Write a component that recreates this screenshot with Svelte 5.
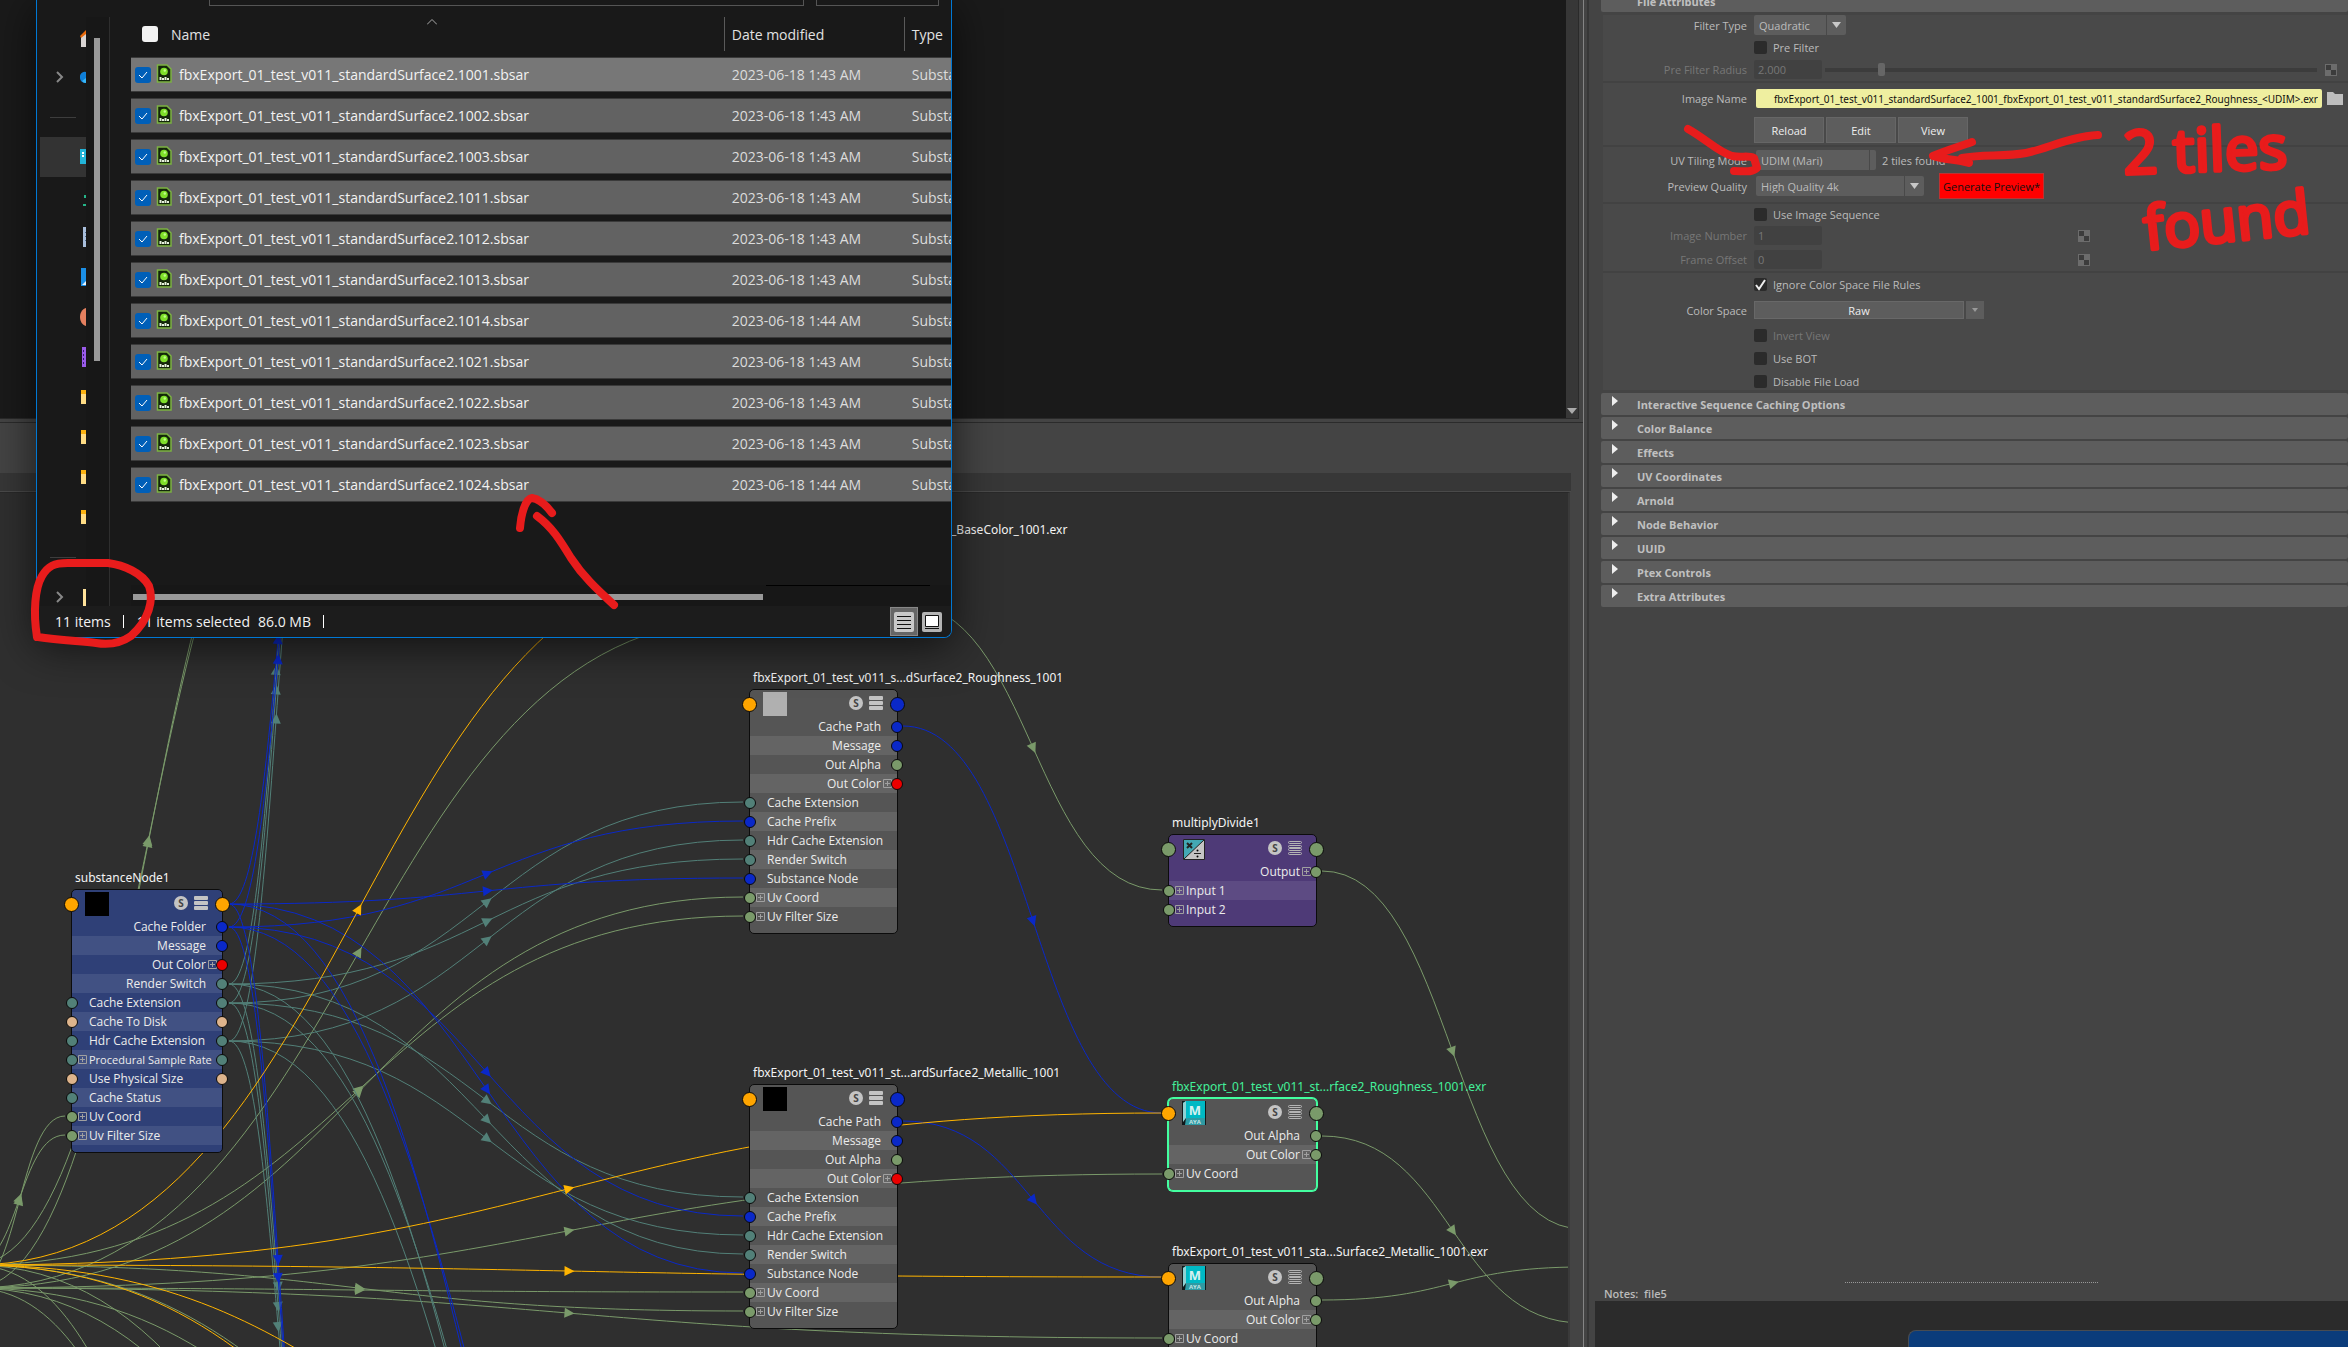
<script lang="ts">
    type Side = 'in' | 'out' | 'both'
    type Edge = [number, number, number, number, string]

    interface Attr {
        name: string
        side: Side
        color: string
        plus?: boolean
    }

    interface GraphNode {
        title: string
        x: number
        y: number
        width: number
        kind: string
        thumb: string
        left: string
        right: string
        attrs: Attr[]
    }

    const ORANGE = '#ffa500'
    const BLUE = '#0a28c8'
    const RED = '#eb0000'
    const GREEN = '#7a9a6a'
    const TEAL = '#528078'
    const SAND = '#deb48c'
    const YELLOW = '#ffb400'

    // Top of the graph canvas, node and edge coordinates are relative to the window
    const CANVAS_TOP = 493

    const files = [
        ['1001', '1:43'],
        ['1002', '1:43'],
        ['1003', '1:43'],
        ['1011', '1:43'],
        ['1012', '1:43'],
        ['1013', '1:43'],
        ['1014', '1:44'],
        ['1021', '1:43'],
        ['1022', '1:43'],
        ['1023', '1:43'],
        ['1024', '1:44'],
    ]

    const places = [
        'home', 'cloud', 'line', 'desktop', 'download', 'document', 'picture', 'music',
        'video', 'folder', 'folder', 'folder', 'folder', 'line', 'drive',
    ]

    const sections = [
        'Interactive Sequence Caching Options',
        'Color Balance',
        'Effects',
        'UV Coordinates',
        'Arnold',
        'Node Behavior',
        'UUID',
        'Ptex Controls',
        'Extra Attributes',
    ]

    const textureAttrs: Attr[] = [
        { name: 'Cache Path', side: 'out', color: BLUE },
        { name: 'Message', side: 'out', color: BLUE },
        { name: 'Out Alpha', side: 'out', color: GREEN },
        { name: 'Out Color', side: 'out', color: RED, plus: true },
        { name: 'Cache Extension', side: 'in', color: TEAL },
        { name: 'Cache Prefix', side: 'in', color: BLUE },
        { name: 'Hdr Cache Extension', side: 'in', color: TEAL },
        { name: 'Render Switch', side: 'in', color: TEAL },
        { name: 'Substance Node', side: 'in', color: BLUE },
        { name: 'Uv Coord', side: 'in', color: GREEN, plus: true },
        { name: 'Uv Filter Size', side: 'in', color: GREEN, plus: true },
    ]

    const fileAttrs: Attr[] = [
        { name: 'Out Alpha', side: 'out', color: GREEN },
        { name: 'Out Color', side: 'out', color: GREEN, plus: true },
        { name: 'Uv Coord', side: 'in', color: GREEN, plus: true },
    ]

    const nodes: GraphNode[] = [
        {
            title: 'substanceNode1',
            x: 71, y: 889, width: 152, kind: 'substance', thumb: 'black',
            left: ORANGE, right: ORANGE,
            attrs: [
                { name: 'Cache Folder', side: 'out', color: BLUE },
                { name: 'Message', side: 'out', color: BLUE },
                { name: 'Out Color', side: 'out', color: RED, plus: true },
                { name: 'Render Switch', side: 'out', color: TEAL },
                { name: 'Cache Extension', side: 'both', color: TEAL },
                { name: 'Cache To Disk', side: 'both', color: SAND },
                { name: 'Hdr Cache Extension', side: 'both', color: TEAL },
                { name: 'Procedural Sample Rate', side: 'both', color: TEAL, plus: true },
                { name: 'Use Physical Size', side: 'both', color: SAND },
                { name: 'Cache Status', side: 'in', color: TEAL },
                { name: 'Uv Coord', side: 'in', color: GREEN, plus: true },
                { name: 'Uv Filter Size', side: 'in', color: GREEN, plus: true },
            ],
        },
        {
            title: 'fbxExport_01_test_v011_s...dSurface2_Roughness_1001',
            x: 749, y: 689, width: 149, kind: 'texture', thumb: 'grey',
            left: ORANGE, right: BLUE, attrs: textureAttrs,
        },
        {
            title: 'fbxExport_01_test_v011_st...ardSurface2_Metallic_1001',
            x: 749, y: 1084, width: 149, kind: 'texture', thumb: 'black',
            left: ORANGE, right: BLUE, attrs: textureAttrs,
        },
        {
            title: 'multiplyDivide1',
            x: 1168, y: 834, width: 149, kind: 'math', thumb: 'math',
            left: GREEN, right: GREEN,
            attrs: [
                { name: 'Output', side: 'out', color: GREEN, plus: true },
                { name: 'Input 1', side: 'in', color: GREEN, plus: true },
                { name: 'Input 2', side: 'in', color: GREEN, plus: true },
            ],
        },
        {
            title: 'fbxExport_01_test_v011_st...rface2_Roughness_1001.exr',
            x: 1168, y: 1098, width: 149, kind: 'selected', thumb: 'maya',
            left: ORANGE, right: GREEN, attrs: fileAttrs,
        },
        {
            title: 'fbxExport_01_test_v011_sta...Surface2_Metallic_1001.exr',
            x: 1168, y: 1263, width: 149, kind: 'texture', thumb: 'maya',
            left: ORANGE, right: GREEN, attrs: fileAttrs,
        },
    ]

    // [x1, y1, x2, y2, color]
    const edges: Edge[] = [
        [903, 603, 1162, 890, GREEN],
        [1322, 871, 1582, 1229, GREEN],
        [1322, 1136, 1582, 1323, GREEN],
        [1322, 1300, 1582, 1267, GREEN],
        [-27, 1288, 743, 619, GREEN],
        [-27, 1288, 743, 897, GREEN],
        [-27, 1265, 743, 916, GREEN],
        [-27, 1288, 743, 1292, GREEN],
        [-27, 1265, 743, 1311, GREEN],
        [-27, 1288, 1162, 1174, GREEN],
        [-27, 1288, 1162, 1338, GREEN],
        [-27, 1265, 323, 419, GREEN],
        [-27, 1288, 323, 400, GREEN],
        [-27, 1288, 65, 1116, GREEN],
        [-27, 1265, 65, 1135, GREEN],
        [-27, 1288, 743, 1687, GREEN],
        [-27, 1265, 743, 1640, GREEN],
        [-27, 1288, 743, 2062, GREEN],
        [-27, 1265, 743, 2090, GREEN],
        [-27, 1288, 323, 1686, GREEN],
        [-27, 1265, 323, 1694, GREEN],
        [229, 984, 743, 859, TEAL],
        [229, 1003, 743, 802, TEAL],
        [229, 1041, 743, 840, TEAL],
        [229, 984, 743, 1254, TEAL],
        [229, 1003, 743, 1197, TEAL],
        [229, 1041, 743, 1235, TEAL],
        [229, 984, 743, 2044, TEAL],
        [229, 1003, 743, 1987, TEAL],
        [229, 1041, 743, 2025, TEAL],
        [229, 984, 323, 360, TEAL],
        [229, 1003, 323, 380, TEAL],
        [229, 1041, 323, 400, TEAL],
        [229, 984, 327, 1586, TEAL],
        [229, 1003, 327, 1607, TEAL],
        [229, 1041, 327, 1609, TEAL],
        [229, 904, 743, 878, BLUE],
        [229, 927, 743, 821, BLUE],
        [229, 904, 743, 1273, BLUE],
        [229, 927, 743, 1216, BLUE],
        [229, 904, 743, 2000, BLUE],
        [229, 927, 743, 1940, BLUE],
        [229, 904, 327, 378, BLUE],
        [229, 927, 327, 395, BLUE],
        [229, 904, 327, 1612, BLUE],
        [229, 927, 327, 1625, BLUE],
        [903, 726, 1162, 1113, BLUE],
        [903, 1121, 1162, 1277, BLUE],
        [-27, 1265, 1162, 1113, YELLOW],
        [-27, 1265, 1162, 1277, YELLOW],
        [-27, 1265, 743, 556, YELLOW],
        [-27, 1265, 743, 1655, YELLOW],
        [-27, 1265, 743, 1508, YELLOW],
    ]

    function edgePath([x1, y1, x2, y2]: Edge): string {
        const mid = (x1 + x2) / 2
        return `M${x1},${y1} C${mid},${y1} ${mid},${y2} ${x2},${y2}`
    }

    function arrowTransform([x1, y1, x2, y2]: Edge): string {
        const angle = (Math.atan2(2 * (y2 - y1), x2 - x1) * 180) / Math.PI
        return `translate(${(x1 + x2) / 2},${(y1 + y2) / 2}) rotate(${angle})`
    }
</script>

{#snippet plusBox()}
    <svg class="plus" width="9" height="9" viewBox="0 0 9 9">
        <path d="M.5 .5h8v8h-8z M4.5 2v5 M2 4.5h5" />
    </svg>
{/snippet}

{#snippet checker()}
    <svg class="checker" width="12" height="12" viewBox="0 0 12 12">
        <rect width="12" height="12" fill="#6c6c6c" />
        <rect x="1" y="1" width="5" height="5" fill="#3c3c3c" />
        <rect x="6" y="6" width="5" height="5" fill="#3c3c3c" />
    </svg>
{/snippet}

{#snippet triangle()}
    <svg class="triangle" width="9" height="6" viewBox="0 0 9 6"><path d="M0 0h9L4.500 6z" /></svg>
{/snippet}

<div class="desktop">
    <main class="workspace">
        <div class="viewport">
            <div class="viewport-scroll">
                <svg width="10" height="6" viewBox="0 0 10 6"><path d="M0 0h10L5 6z" fill="#aaa" /></svg>
            </div>
        </div>
        <div class="toolbar-gap"></div>
        <div class="tab-strip"></div>

        <div class="graph">
            <svg class="edges" width="1568" height="854" viewBox="0 {CANVAS_TOP} 1568 854">
                {#each edges as edge}
                    <path d={edgePath(edge)} stroke={edge[4]} fill="none" />
                    <path d="M-3 -5L7 0L-3 5z" fill={edge[4]} transform={arrowTransform(edge)} />
                {/each}
            </svg>

            <span class="node-title" style:left="951px" style:top="{521 - CANVAS_TOP}px">_BaseColor_1001.exr</span>

            {#each nodes as node}
                <span
                    class="node-title"
                    class:picked={node.kind === 'selected'}
                    style:left="{node.x + 4}px"
                    style:top="{node.y - 20 - CANVAS_TOP}px">{node.title}</span>
                <section
                    class="node {node.kind}"
                    style:left="{node.x}px"
                    style:top="{node.y - CANVAS_TOP}px"
                    style:width="{node.width}px"
                >
                    <header>
                        <i class="port big left" style:background={node.left}></i>
                        {#if node.thumb === 'maya'}
                            <svg width="24" height="24" viewBox="0 0 24 24">
                                <path d="M0 0h24v24H0z" fill="#10181a" />
                                <path d="M1 2L4 0h19v17H1z" fill="#00b9c4" />
                                <path d="M1 2L4 0v17L1 21z" fill="#8fd0d2" />
                                <path d="M4 17h19v7H3z" fill="#2e9aa3" />
                                <text x="13" y="14" class="logo-m">M</text>
                                <text x="13" y="23" class="logo-aya">AYA</text>
                            </svg>
                        {:else if node.thumb === 'math'}
                            <svg width="24" height="24" viewBox="0 0 24 24">
                                <path d="M1.500 2.500h21v20h-21z" fill="#c4c4c4" stroke="#222" />
                                <path d="M2 3h20L2 22z" fill="#43a8b4" />
                                <path d="M22 3L2 22" stroke="#222" />
                                <path d="M5 6l5 5 M10 6l-5 5" stroke="#222" stroke-width="2" />
                                <path d="M12 16.500h7" stroke="#222" />
                                <circle cx="15.500" cy="13.500" r="1" /><circle cx="15.500" cy="19.500" r="1" />
                            </svg>
                        {:else}
                            <span class="thumb {node.thumb}"></span>
                        {/if}
                        <span class="swatch-s">S</span>
                        <svg
                            class="stack"
                            class:outlined={node.thumb === 'maya' || node.thumb === 'math'}
                            width="14" height="14" viewBox="0 0 14 14"
                        >
                            {#if node.thumb === 'maya' || node.thumb === 'math'}
                                {#each [0, 4, 7, 11] as y}
                                    <rect x=".5" y={y + 0.5} width="13" height="2" rx="1" />
                                {/each}
                            {:else}
                                {#each [0, 5, 10] as y}
                                    <rect x="0" {y} width="14" height="4" rx="1" />
                                {/each}
                            {/if}
                        </svg>
                        <i class="port big right" style:background={node.right}></i>
                    </header>
                    <ul>
                        {#each node.attrs as attr}
                            <li class:out={attr.side === 'out'} class:long={attr.name.length > 20}>
                                {#if attr.side !== 'out'}
                                    <i class="port left" style:background={attr.color}></i>
                                {/if}
                                <span class="slot">{#if attr.plus}{@render plusBox()}{/if}</span>
                                <span>{attr.name}</span>
                                {#if attr.side !== 'in'}
                                    <i class="port right" style:background={attr.color}></i>
                                {/if}
                            </li>
                        {/each}
                    </ul>
                </section>
            {/each}
        </div>
    </main>

    <aside class="attributes">
        <button class="section open">File Attributes</button>
        <form class="fields">
            <div class="group">
                <div class="row">
                    <label for="filter">Filter Type</label>
                    <span class="combo filter">
                        <select id="filter"><option>Quadratic</option></select>
                        {@render triangle()}
                    </span>
                </div>
                <div class="row">
                    <span></span>
                    <label class="check"><input type="checkbox" />Pre Filter</label>
                </div>
                <div class="row off">
                    <label for="radius">Pre Filter Radius</label>
                    <input id="radius" class="small" type="text" value="2.000" disabled />
                    <input class="slider" type="range" min="0" max="100" value="11" aria-label="Pre Filter Radius" disabled />
                    {@render checker()}
                </div>
            </div>

            <div class="group image">
                <div class="row">
                    <label for="image">Image Name</label>
                    <input
                        id="image"
                        class="path"
                        type="text"
                        value="fbxExport_01_test_v011_standardSurface2_1001_fbxExport_01_test_v011_standardSurface2_Roughness_<UDIM>.exr"
                    />
                    <button type="button" class="browse" aria-label="Browse">
                        <svg width="18" height="15" viewBox="0 0 18 15">
                            <path d="M1 1h6l2 2h8v11H1z" fill="#bdbdbd" />
                        </svg>
                    </button>
                </div>
                <div class="row">
                    <span></span>
                    <div class="actions">
                        <button type="button">Reload</button>
                        <button type="button">Edit</button>
                        <button type="button">View</button>
                    </div>
                </div>
            </div>

            <div class="group tiling">
                <div class="row">
                    <label for="tiling">UV Tiling Mode</label>
                    <span class="combo cut">
                        <select id="tiling"><option>UDIM (Mari)</option></select>
                    </span>
                    <span>2 tiles found</span>
                </div>
                <div class="row">
                    <label for="quality">Preview Quality</label>
                    <span class="combo quality">
                        <select id="quality"><option>High Quality 4k</option></select>
                        {@render triangle()}
                    </span>
                    <button type="button" class="generate">Generate Preview*</button>
                </div>
            </div>

            <div class="group sequence">
                <div class="row">
                    <span></span>
                    <label class="check"><input type="checkbox" />Use Image Sequence</label>
                </div>
                <div class="row off">
                    <label for="number">Image Number</label>
                    <input id="number" class="small" type="text" value="1" disabled />
                    <span class="far">{@render checker()}</span>
                </div>
                <div class="row off">
                    <label for="offset">Frame Offset</label>
                    <input id="offset" class="small" type="text" value="0" disabled />
                    <span class="far">{@render checker()}</span>
                </div>
            </div>

            <div class="group color">
                <div class="row">
                    <span></span>
                    <label class="check"><input type="checkbox" checked />Ignore Color Space File Rules</label>
                </div>
                <div class="row">
                    <span>Color Space</span>
                    <div class="split">
                        <button type="button" class="raw">Raw</button>
                        <button type="button" class="more" aria-label="Color spaces">
                            <svg width="6" height="4" viewBox="0 0 6 4"><path d="M0 0h6L3 4z" fill="#999" /></svg>
                        </button>
                    </div>
                </div>
                <div class="row off">
                    <span></span>
                    <label class="check"><input type="checkbox" disabled />Invert View</label>
                </div>
                <div class="row">
                    <span></span>
                    <label class="check"><input type="checkbox" />Use BOT</label>
                </div>
                <div class="row">
                    <span></span>
                    <label class="check"><input type="checkbox" />Disable File Load</label>
                </div>
            </div>
        </form>

        {#each sections as section}
            <button class="section">
                <svg width="6" height="10" viewBox="0 0 6 10"><path d="M0 0l6 5-6 5z" fill="#eee" /></svg>
                {section}
            </button>
        {/each}

        <div class="notes">
            <div class="grip"></div>
            <label for="notes">Notes:&nbsp; file5</label>
            <textarea id="notes"></textarea>
        </div>
        <div class="toast"></div>
    </aside>

    <div class="explorer">
        <div class="address"><span></span><span></span></div>
        <div class="explorer-body">
            <nav>
                {#each places as place, i}
                    <a href="#place-{i}" class:current={place === 'desktop'} aria-label={place}>
                        {#if place === 'line'}
                            <span class="rule"></span>
                        {:else}
                            {#if place === 'cloud' || place === 'drive'}
                                <svg class="chevron" width="8" height="12" viewBox="0 0 8 12"><path d="M1 1l5 5-5 5" /></svg>
                            {/if}
                            <svg class="place" width="6" height="20" viewBox="0 0 6 20">
                                {#if place === 'home'}
                                    <path d="M1 9l5-5v16H1z" fill="#d8d4d2" />
                                    <path d="M0 9l6-6v4L1 11z" fill="#e8690b" />
                                {:else if place === 'cloud'}
                                    <path d="M6 5a5 5 0 0 0-6 6c0 3 3 5 6 5z" fill="#0f7fd8" />
                                    <path d="M6 11l-4 3c1 1 2 2 4 2z" fill="#38b6f5" />
                                {:else if place === 'desktop'}
                                    <path d="M0 2h6v15H0z" fill="#22b4d8" />
                                    <path d="M2 5h2v2H2z M2 8h2v2H2z" fill="#fff" />
                                {:else if place === 'download'}
                                    <path d="M4 8h2v3H4z M3 17h3v2H3z" fill="#25b589" />
                                {:else if place === 'document'}
                                    <path d="M3 0h3v20H3z" fill="#a9bfdc" />
                                    <path d="M5 5h1v1H5z M5 9h1v1H5z M5 13h1v1H5z" fill="#4f6a8c" />
                                {:else if place === 'picture'}
                                    <path d="M1 1h5v18H1z" fill="#1b8fe6" />
                                    <path d="M6 14l-4 4h4z" fill="#e8f4ff" />
                                {:else if place === 'music'}
                                    <path d="M6 1C2 2 0 6 0 10s2 8 6 9z" fill="#e5805f" />
                                {:else if place === 'video'}
                                    <path d="M2 0h4v20H2z" fill="#9a5bea" />
                                    <path d="M3 3h1v2H3z M3 7h1v2H3z M3 11h1v2H3z M3 15h1v2H3z" fill="#3a1a70" />
                                {:else if place === 'folder'}
                                    <path d="M1 3h5v4H1z" fill="#fbb212" />
                                    <path d="M1 7h5v10H1z" fill="#ffdc84" />
                                {:else}
                                    <path d="M3 2h3v17H3z" fill="#ffe29a" />
                                {/if}
                            </svg>
                        {/if}
                    </a>
                {/each}
            </nav>
            <div class="nav-scroll"><span></span></div>
            <div class="listing">
                <table>
                    <thead>
                        <tr>
                            <th>
                                <div class="cell">
                                    <input type="checkbox" class="select-all" aria-label="Select all" />Name
                                    <svg class="sort" width="10" height="6" viewBox="0 0 10 6"><path d="M0 5.500L5 .5l5 5" /></svg>
                                </div>
                            </th>
                            <th class="col-date">Date modified</th>
                            <th class="col-type">Type</th>
                        </tr>
                    </thead>
                    <tbody>
                        {#each files as [udim, time], i}
                            <tr class:focused={i === 0}>
                                <td>
                                    <label class="cell">
                                        <input type="checkbox" checked />
                                        <svg width="16" height="19" viewBox="0 0 16 19">
                                            <path d="M1.500 1h9.500l4 4v13H1.500z" fill="#14260a" stroke="#7cb342" stroke-width="1.500" />
                                            <circle cx="8" cy="7.500" r="3.800" fill="#7fe02a" />
                                            <circle cx="8.800" cy="6.500" r="1.200" fill="#c2ff8a" />
                                            <path d="M3.500 13h2v3h-2z M6 14h2v2H6z M8.500 13h2v3h-2z M11 14h2v2h-2z" fill="#e6f0dc" />
                                        </svg>
                                        fbxExport_01_test_v011_standardSurface2.{udim}.sbsar
                                    </label>
                                </td>
                                <td class="meta">2023-06-18 {time} AM</td>
                                <td class="meta">Substance</td>
                            </tr>
                        {/each}
                    </tbody>
                </table>
                <div class="h-scroll"><span></span></div>
            </div>
        </div>
        <footer>
            <span>11 items</span>
            <i></i>
            <span>11 items selected</span>
            <span class="size">86.0 MB</span>
            <i></i>
            <button class="view active" aria-label="Details view">
                <svg width="20" height="20" viewBox="0 0 20 20">
                    <rect width="20" height="20" rx="2" fill="#c8c8c8" />
                    <path d="M3 4.500h14 M3 8.500h14 M3 12.500h14 M3 16.500h14" stroke="#111" />
                </svg>
            </button>
            <button class="view" aria-label="Large icons view">
                <svg width="20" height="20" viewBox="0 0 20 20">
                    <rect width="20" height="20" rx="2" fill="#b4b4b4" />
                    <path d="M3.500 3.500h13v11h-13z" fill="#fff" stroke="#111" />
                    <path d="M3 16.500h14" stroke="#111" />
                </svg>
            </button>
        </footer>
    </div>

    <svg class="ink" width="2348" height="1347" viewBox="0 0 2348 1347">
        <path d="M37 637C33 612 35 588 42 576C48 566 54 563 68 563L108 563C124 565 142 573 149 586C154 600 149 620 131 636C121 643 108 645 96 643C78 641 58 640 38 637" />
        <path d="M520 528C521 515 525 499 532 498C539 499 546 505 552 513" />
        <path d="M537 516C552 527 560 540 571 558C584 578 600 592 614 605" />
        <path d="M1688 129C1706 139 1718 152 1732 156C1742 158 1748 155 1754 158L1757 168C1752 173 1744 171 1734 171" />
        <path d="M2098 135C2072 136 2046 149 2026 153C2004 157 1982 154 1962 158" />
        <path d="M1972 142C1958 147 1944 151 1933 156C1944 160 1956 159 1969 163" />
        <text x="2124" y="174" transform="rotate(-2 2124 174)">2 tiles</text>
        <text x="2146" y="250" transform="rotate(-6 2146 250)">found</text>
    </svg>
</div>

<style>
    :global(body) {
        background: #444;
        overflow: hidden;
    }

    .desktop {
        position: relative;
        display: grid;
        grid-template-columns: 1583fr 765fr;
        min-height: 100vh;
        overflow: hidden;
        font-family: 'Open Sans', 'Noto Sans', sans-serif;
        font-size: 11px;
        color: #bbb;
    }

    button,
    input,
    select,
    textarea {
        font: inherit;
        color: inherit;
        margin: 0;
        padding: 0;
        border: 0;
        box-sizing: border-box;
    }

    /* Left side */

    .workspace {
        display: flex;
        flex-direction: column;
        min-width: 0;
    }

    .viewport {
        display: flex;
        justify-content: flex-end;
        height: 418px;
        margin-right: 4px;
        background: #1a1a1a;
        border-right: 1px solid #2a2a2a;
        border-bottom: 1px solid #2a2a2a;
    }

    .viewport-scroll {
        display: flex;
        align-items: flex-end;
        justify-content: center;
        width: 12px;
        padding-bottom: 4px;
        background: #373737;
    }

    .toolbar-gap {
        height: 50px;
        margin-top: 3px;
        border-top: 1px solid #2b2b2b;
    }

    .tab-strip {
        height: 18px;
        margin-right: 12px;
        background: #373737;
        border-bottom: 1px solid #4a4a4a;
    }

    .graph {
        position: relative;
        flex: 1;
        margin-right: 13px;
        background: #2f2f2f;
        border-top: 1px solid #292929;
        border-right: 2px solid #3a3a3a;
        overflow: hidden;
        font-size: 12px;
        box-sizing: border-box;
    }

    .edges {
        position: absolute;
        left: 0;
        top: 0;
        overflow: visible;
    }

    .node-title {
        position: absolute;
        font-family: 'Noto Sans', sans-serif;
        font-size: 12px;
        line-height: 18px;
        color: #f4f4f4;
        white-space: nowrap;
    }

    .node-title.picked {
        color: #43f09a;
    }

    .node {
        position: absolute;
        box-sizing: border-box;
        padding-bottom: 7px;
        background: #555;
        border: 1px solid #0c0c0c;
        border-radius: 5px;
        color: #ececec;
    }

    .node.substance {
        background: #2f4077;
    }

    .node.math {
        background: #4e3a77;
    }

    .node.selected {
        box-shadow: 0 0 0 1px #43ffa0;
        border-color: #43ffa0;
    }

    .node header {
        position: relative;
        display: flex;
        align-items: center;
        height: 27px;
        padding: 0 14px 0 13px;
    }

    .thumb {
        width: 24px;
        height: 24px;
        background: #000;
    }

    .thumb.grey {
        background: #b0b0b0;
    }

    .logo-m {
        font-size: 13px;
        font-weight: 700;
        text-anchor: middle;
        fill: #d5f2f2;
    }

    .logo-aya {
        font-size: 6px;
        font-weight: 700;
        text-anchor: middle;
        fill: #c5e4e6;
    }

    .swatch-s {
        width: 14px;
        height: 14px;
        margin: 0 6px 2px auto;
        border-radius: 50%;
        background: #c4c4c4;
        color: #444;
        font-size: 10px;
        font-weight: 700;
        line-height: 14px;
        text-align: center;
    }

    .stack {
        margin-bottom: 2px;
    }

    .stack rect {
        fill: #c4c4c4;
    }

    .stack.outlined rect {
        fill: none;
        stroke: #b4b4b4;
    }

    .node ul {
        margin: 0;
        padding: 0;
        list-style: none;
    }

    .node li {
        position: relative;
        display: flex;
        align-items: center;
        gap: 2px;
        height: 19px;
        padding: 0 5px 0 6px;
        white-space: nowrap;
    }

    .node li:nth-child(even) {
        background: rgba(255, 255, 255, 0.09);
    }

    .node li.out {
        flex-direction: row-reverse;
    }

    /* keeps the name clear of the right port */
    .node li.long {
        font-size: 11px;
    }

    .slot {
        display: flex;
        flex: none;
        width: 9px;
    }

    .plus path {
        fill: none;
        stroke: #a0a0a0;
    }

    .port {
        position: absolute;
        top: 50%;
        width: 10px;
        height: 10px;
        margin-top: -6px;
        border: 1px solid #0a0a0a;
        border-radius: 50%;
    }

    .port.left {
        left: -6px;
    }

    .port.right {
        right: -6px;
    }

    .port.big {
        width: 13px;
        height: 13px;
        margin-top: -7px;
    }

    .port.big.left {
        left: -8px;
    }

    .port.big.right {
        right: -8px;
    }

    /* Attribute editor */

    .attributes {
        position: relative;
        display: flex;
        flex-direction: column;
        min-width: 0;
        padding-left: 11px;
        border-left: 1px solid #858585;
        background: linear-gradient(to right, #444 3px, #373737 3px, #373737 5px, #444 5px);
    }

    .section {
        display: flex;
        align-items: center;
        gap: 19px;
        height: 22px;
        margin: 0 0 2px 6px;
        padding-left: 11px;
        background: #5d5d5d;
        border-radius: 2px;
        font-weight: 700;
        color: #c0c0c0;
        text-align: left;
    }

    .section.open {
        margin-top: -10px;
        margin-bottom: 3px;
        padding-left: 36px;
    }

    .section svg {
        margin-bottom: 6px;
    }

    .fields {
        margin: 0 0 3px 8px;
        background: #494949;
    }

    .group {
        display: flex;
        flex-direction: column;
        gap: 6px;
        padding-bottom: 2px;
        border-bottom: 2px solid #424242;
    }

    .group.image {
        gap: 9px;
        padding: 6px 0 2px;
    }

    .group.tiling {
        gap: 3px;
        padding: 3px 0;
    }

    .group.sequence {
        gap: 5px;
        padding: 4px 0 2px;
    }

    .group.color {
        gap: 10px;
        padding: 5px 0 2px;
        border-bottom: 0;
    }

    .row {
        display: flex;
        align-items: center;
        line-height: 13px;
        white-space: nowrap;
    }

    .row > :first-child {
        flex: none;
        width: 144px;
        margin-right: 7px;
        text-align: right;
    }

    .row.off {
        color: #777;
    }

    .check {
        display: flex;
        align-items: center;
        gap: 6px;
    }

    .check input {
        appearance: none;
        width: 13px;
        height: 13px;
        background: #2b2b2b;
        border-radius: 2px;
    }

    .check input:checked {
        background: #2b2b2b
            url("data:image/svg+xml,%3Csvg xmlns='http://www.w3.org/2000/svg' viewBox='0 0 13 13'%3E%3Cpath d='M2 7l3 4 6-9' fill='none' stroke='%23eee' stroke-width='2'/%3E%3C/svg%3E");
    }

    .combo {
        display: flex;
        align-items: center;
        position: relative;
        height: 20px;
        background: #5d5d5d;
        border-radius: 2px;
    }

    .combo select {
        appearance: none;
        width: 100%;
        height: 20px;
        padding-left: 5px;
        background: linear-gradient(#494949, #494949) no-repeat right 19px top / 1px 100%;
    }

    .combo .triangle {
        position: absolute;
        right: 5px;
        pointer-events: none;
    }

    .triangle path {
        fill: #c8c8c8;
    }

    .filter {
        width: 92px;
    }

    .quality,
    .cut {
        margin-left: 2px;
    }

    .quality {
        width: 168px;
    }

    .cut {
        width: 120px;
        margin-right: 6px;
    }

    .cut select {
        background-position: right 6px top;
    }

    .small {
        width: 68px;
        height: 19px;
        padding-left: 4px;
        background: #414141;
        border-radius: 2px;
    }

    .slider {
        appearance: none;
        flex: 1;
        height: 14px;
        margin: 0 8px 0 3px;
        background: linear-gradient(#3c3c3c, #3c3c3c) no-repeat center / 100% 4px;
    }

    .slider::-webkit-slider-thumb {
        appearance: none;
        width: 7px;
        height: 13px;
        background: #666;
        border-radius: 2px;
    }

    .checker {
        margin-right: 11px;
    }

    .far {
        display: flex;
        margin-left: 256px;
    }

    .path {
        flex: 1;
        min-width: 0;
        height: 19px;
        margin-left: 2px;
        padding: 0 4px;
        background: #efefa0;
        border-radius: 2px;
        font-family: 'Noto Sans', sans-serif;
        font-size: 10px;
        text-align: right;
        color: #111;
    }

    .browse {
        display: flex;
        margin: 0 4px;
        background: none;
    }

    .actions,
    .split {
        display: flex;
        gap: 2px;
    }

    .actions button {
        width: 70px;
        height: 26px;
        background: #5d5d5d;
        border: 1px solid #666;
        color: #eee;
    }

    .generate {
        height: 26px;
        margin-left: 15px;
        padding: 0 3px;
        background: #f00;
        border: 1px solid #b33;
        color: #111;
    }

    .raw {
        width: 210px;
        height: 18px;
        background: #5d5d5d;
        border: 1px solid #686868;
        color: #eee;
    }

    .more {
        display: flex;
        align-items: center;
        justify-content: center;
        width: 18px;
        height: 18px;
        background: #5d5d5d;
    }

    .notes {
        display: flex;
        flex-direction: column;
        margin-top: auto;
    }

    .grip {
        width: 253px;
        margin: 0 auto 4px;
        border-top: 1px dotted #999;
    }

    .notes label {
        padding-left: 9px;
        line-height: 14px;
        font-weight: 600;
    }

    .notes textarea {
        height: 46px;
        background: #2b2b2b;
        resize: none;
    }

    .toast {
        position: absolute;
        right: 0;
        bottom: 0;
        width: 439px;
        height: 16px;
        background: #0b3c7b;
        border: 1px solid #484c52;
        border-width: 1px 0 0 1px;
        border-top-left-radius: 8px;
    }

    /* File explorer window */

    .explorer {
        position: absolute;
        left: 36px;
        top: 0;
        width: 39vw;
        box-sizing: border-box;
        background: #191919;
        border: 1px solid #0078d4;
        border-top: 0;
        border-radius: 0 0 8px 8px;
        box-shadow: 0 8px 44px rgba(0, 0, 0, 0.65);
        overflow: hidden;
        font-size: 14px;
        color: #f2f2f2;
    }

    .address {
        display: flex;
        gap: 12px;
        height: 17px;
        padding: 0 12px 0 172px;
    }

    .address span {
        flex: 1;
        height: 5px;
        border: 1px solid #555;
        border-top: 0;
    }

    .address span:last-child {
        flex: 0 0 121px;
    }

    .explorer-body {
        display: flex;
        height: 589px;
    }

    nav {
        display: flex;
        flex-direction: column;
        width: 49px;
        overflow: hidden;
    }

    nav a {
        display: flex;
        flex: none;
        align-items: center;
        justify-content: flex-end;
        height: 40px;
        margin-left: 3px;
    }

    nav a.current {
        background: #333;
    }

    .rule {
        width: 26px;
        height: 1px;
        margin-right: 10px;
        background: #3d3d3d;
    }

    .chevron {
        margin-right: 16px;
    }

    .chevron path {
        fill: none;
        stroke: #888;
        stroke-width: 2;
    }

    .nav-scroll {
        width: 24px;
        padding: 21px 0 0 8px;
        box-sizing: border-box;
        background: #171717;
        border-right: 1px solid #2e2e2e;
    }

    .nav-scroll span {
        display: block;
        width: 6px;
        height: 323px;
        background: #999;
    }

    .listing {
        display: flex;
        flex: 1;
        flex-direction: column;
        min-width: 0;
        margin-left: 21px;
    }

    table {
        width: 100%;
        margin-top: -6px;
        border-spacing: 0 6px;
        table-layout: fixed;
        white-space: nowrap;
    }

    th {
        height: 34px;
        padding: 0;
        box-sizing: border-box;
        font-weight: 400;
        text-align: left;
        color: #e2e2e2;
    }

    .col-date,
    .col-type {
        padding-left: 7px;
        border-left: 1px solid #5a5a5a;
    }

    .col-date {
        width: 180px;
    }

    .col-type {
        width: 47px;
    }

    td {
        height: 35px;
        padding: 0;
        box-sizing: border-box;
        background: #626262;
        border: solid #3a3a3a;
        border-width: 1px 0;
    }

    .focused td {
        background: #777;
    }

    td.meta {
        padding-left: 8px;
        color: #dcdcdc;
        overflow: hidden;
    }

    .cell {
        display: flex;
        align-items: center;
        position: relative;
    }

    .cell input {
        appearance: none;
        width: 16px;
        height: 16px;
        margin: 0 5px 0 4px;
        background: #005fb8
            url("data:image/svg+xml,%3Csvg xmlns='http://www.w3.org/2000/svg' viewBox='0 0 16 16'%3E%3Cpath d='M4 8l3 3 5-6' fill='none' stroke='%23fff'/%3E%3C/svg%3E");
        border-radius: 3px;
    }

    .cell svg {
        margin-right: 7px;
        margin-bottom: 2px;
    }

    .cell .select-all {
        margin: 0 13px 0 11px;
        background: #f3f3f3;
    }

    .cell .sort {
        position: absolute;
        left: 50%;
        top: -6px;
        fill: none;
        stroke: #aaa;
    }

    .h-scroll {
        display: flex;
        align-items: center;
        height: 21px;
        margin-top: auto;
        padding: 3px 0 0 2px;
        box-sizing: border-box;
        background: linear-gradient(#000, #000) no-repeat 635px 0 / 164px 1px #171717;
    }

    .h-scroll span {
        width: 77%;
        height: 6px;
        background: #999;
    }

    footer {
        display: flex;
        align-items: center;
        height: 31px;
        padding: 0 5px 0 18px;
        background: #1c1c1c;
    }

    footer i {
        width: 1px;
        height: 13px;
        margin: 0 13px 0 12px;
        background: #fff;
    }

    .size {
        margin-left: 8px;
    }

    .view {
        display: flex;
        align-items: center;
        justify-content: center;
        width: 28px;
        height: 29px;
        background: none;
    }

    .view.active {
        margin-left: auto;
        background: #666;
        border: 1px solid #888;
    }

    /* Red pen marks over everything */

    .ink {
        position: absolute;
        left: 0;
        top: 0;
        pointer-events: none;
        fill: none;
        stroke: #e81c1c;
        stroke-width: 8px;
        stroke-linecap: round;
        stroke-linejoin: round;
    }

    .ink text {
        font-size: 60px;
        fill: #e81c1c;
        stroke-width: 4px;
    }
</style>
